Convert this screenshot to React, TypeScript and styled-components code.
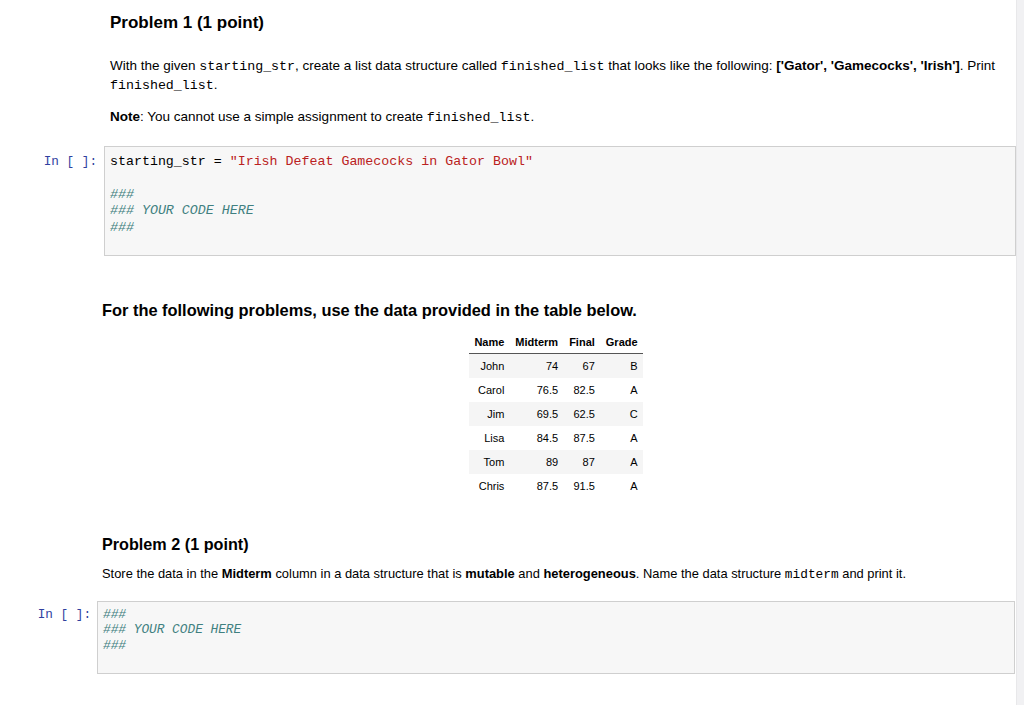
import React from "react";
import styled, { createGlobalStyle } from "styled-components";

const GlobalStyle = createGlobalStyle`
  html, body { margin: 0; padding: 0; background: #ffffff; }
  body { font-family: "Liberation Sans", Arial, Helvetica, sans-serif; color: #000; }
`;

const Page = styled.div`
  display: flex;
  min-height: 705px;
`;

const Notebook = styled.main`
  width: 1016px;
  background: #ffffff;
  display: flex;
  flex-direction: column;
`;

const ScrollStrip = styled.div`
  flex: 1;
  background: #f1f1f3;
  border-left: 1px solid #e8e8ea;
`;

const Markdown = styled.section<{ $indent: number; $top: number }>`
  padding-left: ${(p) => p.$indent + 6}px;
  padding-right: 6px;
  margin-top: ${(p) => p.$top}px;
`;

const Heading = styled.h3<{ $size: number; $top?: number }>`
  margin: ${(p) => p.$top ?? 0}px 0 0;
  font-size: ${(p) => p.$size}px;
  line-height: 20px;
  font-weight: 700;
`;

const Para = styled.p<{ $size: number; $lh: number; $top: number }>`
  margin: ${(p) => p.$top}px 0 0;
  font-size: ${(p) => p.$size}px;
  line-height: ${(p) => p.$lh}px;
`;

const Mono = styled.code<{ $size: number }>`
  font-family: "Liberation Mono", "Courier New", monospace;
  font-size: ${(p) => p.$size}px;
  line-height: 1;
`;

const CodeCell = styled.div<{ $top: number; $right: number }>`
  display: flex;
  margin-top: ${(p) => p.$top}px;
  margin-right: ${(p) => p.$right}px;
`;

const Prompt = styled.div<{ $width: number; $pad: number; $lh: number; $pt: number }>`
  width: ${(p) => p.$width}px;
  flex: none;
  box-sizing: border-box;
  padding-right: ${(p) => p.$pad}px;
  padding-top: ${(p) => p.$pt}px;
  text-align: right;
  font-family: "Liberation Mono", "Courier New", monospace;
  font-size: 12.7px;
  line-height: ${(p) => p.$lh}px;
  color: #303f9f;
  white-space: pre;
`;

const CodeBox = styled.pre<{ $size: number; $lh: number; $pt: number; $pb: number }>`
  flex: 1;
  margin: 0;
  border: 1px solid #cfcfcf;
  background: #f7f7f7;
  padding: ${(p) => p.$pt}px 5px ${(p) => p.$pb}px;
  font-family: "Liberation Mono", "Courier New", monospace;
  font-size: ${(p) => p.$size}px;
  line-height: ${(p) => p.$lh}px;
  color: #000;
  white-space: pre;
  overflow: hidden;
`;

const Str = styled.span`
  color: #ba2121;
`;

const Comment = styled.span`
  color: #408080;
  font-style: italic;
`;

const Table = styled.table`
  margin: 10px auto 0;
  border-collapse: collapse;
  font-size: 11px;
  color: #000;
`;

const Th = styled.th`
  font-weight: 700;
  text-align: right;
  padding: 0 5.5px;
  height: 23px;
  vertical-align: middle;
  border-bottom: 1px solid #555;
`;

const Tr = styled.tr`
  &:nth-child(odd) {
    background: #f5f5f5;
  }
`;

const Td = styled.td`
  text-align: right;
  padding: 0 5.5px;
  height: 24px;
  vertical-align: middle;
`;

const rows = [
  ["John", "74", "67", "B"],
  ["Carol", "76.5", "82.5", "A"],
  ["Jim", "69.5", "62.5", "C"],
  ["Lisa", "84.5", "87.5", "A"],
  ["Tom", "89", "87", "A"],
  ["Chris", "87.5", "91.5", "A"],
];

export default function App() {
  return (
    <>
      <GlobalStyle />
      <Page>
        <Notebook>
          <Markdown $indent={104} $top={13}>
            <Heading $size={17}>Problem 1 (1 point)</Heading>
            <Para $size={13.5} $lh={19} $top={23}>
              With the given <Mono $size={13.3}>starting_str</Mono>, create a list data structure called{" "}
              <Mono $size={13.3}>finished_list</Mono> that looks like the following:{" "}
              <b>['Gator', 'Gamecocks', 'Irish']</b>. Print <Mono $size={13.3}>finished_list</Mono>.
            </Para>
            <Para $size={13.5} $lh={19} $top={13}>
              <b>Note</b>: You cannot use a simple assignment to create <Mono $size={13.3}>finished_list</Mono>.
            </Para>
          </Markdown>

          <CodeCell $top={20} $right={0}>
            <Prompt $width={104} $pad={7} $lh={16.5} $pt={7.5}>In [ ]:</Prompt>
            <CodeBox $size={13.3} $lh={16.5} $pt={6.5} $pb={2.5}>
              {"starting_str = "}
              <Str>"Irish Defeat Gamecocks in Gator Bowl"</Str>
              {"\n\n"}
              <Comment>###</Comment>
              {"\n"}
              <Comment>### YOUR CODE HERE</Comment>
              {"\n"}
              <Comment>###</Comment>
              {"\n "}
            </CodeBox>
          </CodeCell>

          <Markdown $indent={96} $top={44}>
            <Heading $size={16.4}>For the following problems, use the data provided in the table below.</Heading>
            <Table>
              <thead>
                <tr>
                  <Th>Name</Th>
                  <Th>Midterm</Th>
                  <Th>Final</Th>
                  <Th>Grade</Th>
                </tr>
              </thead>
              <tbody>
                {rows.map((r) => (
                  <Tr key={r[0]}>
                    {r.map((c, i) => (
                      <Td key={i}>{c}</Td>
                    ))}
                  </Tr>
                ))}
              </tbody>
            </Table>
            <Heading $size={16.2} $top={36}>Problem 2 (1 point)</Heading>
            <Para $size={12.9} $lh={18} $top={11}>
              Store the data in the <b>Midterm</b> column in a data structure that is <b>mutable</b> and{" "}
              <b>heterogeneous</b>. Name the data structure <Mono $size={12.8}>midterm</Mono> and print it.
            </Para>
          </Markdown>

          <CodeCell $top={18} $right={1}>
            <Prompt $width={97} $pad={6} $lh={15.8} $pt={5.5}>In [ ]:</Prompt>
            <CodeBox $size={12.8} $lh={15.8} $pt={4.5} $pb={3.5}>
              <Comment>###</Comment>
              {"\n"}
              <Comment>### YOUR CODE HERE</Comment>
              {"\n"}
              <Comment>###</Comment>
              {"\n "}
            </CodeBox>
          </CodeCell>
        </Notebook>
        <ScrollStrip />
      </Page>
    </>
  );
}
